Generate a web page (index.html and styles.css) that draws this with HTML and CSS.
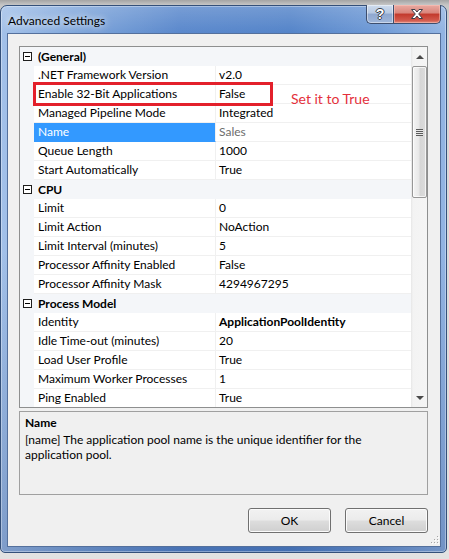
FILE: index.html
```html
<!DOCTYPE html>
<html>
<head>
<meta charset="utf-8">
<link rel="stylesheet" href="styles.css">
</head>
<body>
<div class="window">
  <div class="titlebar">
    <div class="title">Advanced Settings</div>
    <div class="caption-btns">
      <div class="cbtn help"><span class="qmark">?</span></div>
      <div class="cbtn close">
        <svg width="16" height="12" viewBox="0 0 16 12"><path d="M2.5 1.5h3.5l2 2.5 2-2.5h3.5l-3.8 4.5 3.8 4.5h-3.5l-2-2.5-2 2.5h-3.5l3.8-4.5z" fill="#fff" stroke="#3a3f4a" stroke-width="1" stroke-linejoin="round"/></svg>
      </div>
    </div>
  </div>
  <div class="client">
    <div class="grid">
      <div class="rows">
        <div class="cat"><span class="exp"></span><span class="cat-label">(General)</span></div>
        <div class="row"><span class="gut"></span><span class="name">.NET Framework Version</span><span class="val">v2.0</span></div>
        <div class="row"><span class="gut"></span><span class="name">Enable 32-Bit Applications</span><span class="val">False</span></div>
        <div class="row"><span class="gut"></span><span class="name">Managed Pipeline Mode</span><span class="val">Integrated</span></div>
        <div class="row selected"><span class="gut"></span><span class="name">Name</span><span class="val">Sales</span></div>
        <div class="row"><span class="gut"></span><span class="name">Queue Length</span><span class="val">1000</span></div>
        <div class="row"><span class="gut"></span><span class="name">Start Automatically</span><span class="val">True</span></div>
        <div class="cat"><span class="exp"></span><span class="cat-label">CPU</span></div>
        <div class="row"><span class="gut"></span><span class="name">Limit</span><span class="val">0</span></div>
        <div class="row"><span class="gut"></span><span class="name">Limit Action</span><span class="val">NoAction</span></div>
        <div class="row"><span class="gut"></span><span class="name">Limit Interval (minutes)</span><span class="val">5</span></div>
        <div class="row"><span class="gut"></span><span class="name">Processor Affinity Enabled</span><span class="val">False</span></div>
        <div class="row"><span class="gut"></span><span class="name">Processor Affinity Mask</span><span class="val">4294967295</span></div>
        <div class="cat"><span class="exp"></span><span class="cat-label">Process Model</span></div>
        <div class="row"><span class="gut"></span><span class="name">Identity</span><span class="val bold">ApplicationPoolIdentity</span></div>
        <div class="row"><span class="gut"></span><span class="name">Idle Time-out (minutes)</span><span class="val">20</span></div>
        <div class="row"><span class="gut"></span><span class="name">Load User Profile</span><span class="val">True</span></div>
        <div class="row"><span class="gut"></span><span class="name">Maximum Worker Processes</span><span class="val">1</span></div>
        <div class="row"><span class="gut"></span><span class="name">Ping Enabled</span><span class="val">True</span></div>
      </div>
      <div class="scroll">
        <div class="arrow"><span class="tri-up"></span></div>
        <div class="thumb"><span class="grip"></span></div>
        <div class="track"></div>
        <div class="arrow"><span class="tri-down"></span></div>
      </div>
      <div class="highlight"></div>
      <div class="note">Set it to True</div>
    </div>
    <div class="desc">
      <div class="desc-title">Name</div>
      <div class="desc-text">[name] The application pool name is the unique identifier for the application pool.</div>
    </div>
    <div class="buttons">
      <button class="btn">OK</button>
      <button class="btn">Cancel</button>
    </div>
    <svg class="gripper" width="8" height="8" viewBox="0 0 8 8">
      <g fill="#fff"><rect x="7" y="1" width="1" height="1"/><rect x="4" y="4" width="1" height="1"/><rect x="7" y="4" width="1" height="1"/><rect x="1" y="7" width="1" height="1"/><rect x="4" y="7" width="1" height="1"/><rect x="7" y="7" width="1" height="1"/></g>
      <g fill="#a6a6a6"><rect x="6" y="0" width="1" height="1"/><rect x="3" y="3" width="1" height="1"/><rect x="6" y="3" width="1" height="1"/><rect x="0" y="6" width="1" height="1"/><rect x="3" y="6" width="1" height="1"/><rect x="6" y="6" width="1" height="1"/></g>
    </svg>
  </div>
</div>
</body>
</html>
```
FILE: styles.css
```css
html, body {
  margin: 0;
  padding: 0;
}
body {
  width: 449px;
  height: 559px;
  overflow: hidden;
  background: linear-gradient(180deg, #a4a4a4 0, #c6c6c6 5px, #d6d6d6 40px, #e2e2e2 100%);
  font-family: Lato, "Liberation Sans", sans-serif;
  font-size: 12px;
  color: #000;
}
.window {
  box-sizing: border-box;
  margin-top: 5px;
  width: 447px;
  height: 548px;
  border: 1px solid #34507a;
  border-radius: 7px 7px 5px 5px;
  padding: 0 5px 5px 6px;
  display: flex;
  flex-direction: column;
  background:
    linear-gradient(180deg, rgba(255,255,255,0.18) 0, rgba(255,255,255,0) 27px, rgba(20,50,110,0) 45%, rgba(20,50,110,0.25) 100%),
    linear-gradient(90deg, #a3c1e9 0%, #7ea5da 18%, #5a88cc 40%, #5484c9 65%, #6f9ad6 85%, #93b5e3 100%);
  box-shadow: inset 0 0 0 1px rgba(255,255,255,0.35);
}
.titlebar {
  height: 27px;
  flex: none;
  display: flex;
  justify-content: space-between;
}
.title {
  align-self: center;
  padding-left: 1px;
  margin-top: 1px;
  text-shadow: 0 0 6px rgba(255,255,255,0.9), 0 0 12px rgba(255,255,255,0.6);
}
.caption-btns {
  display: flex;
  margin-top: -1px;
  height: 19px;
}
.cbtn {
  box-sizing: border-box;
  height: 19px;
  display: flex;
  align-items: center;
  justify-content: center;
  border: 1px solid #3d4e6e;
  border-top: none;
}
.help {
  width: 27px;
  border-radius: 0 0 0 5px;
  border-right: none;
  background: linear-gradient(180deg, #cfdcee 0, #b6c8e2 45%, #8fa8cf 50%, #9fb6da 100%);
  box-shadow: inset 0 0 0 1px rgba(255,255,255,0.45);
}
.close {
  width: 48px;
  border-radius: 0 0 5px 0;
  background: linear-gradient(180deg, #e9aaa2 0, #d9857b 45%, #c2392c 50%, #d2594c 85%, #e08a7e 100%);
  box-shadow: inset 0 0 0 1px rgba(255,200,190,0.5);
}
.qmark {
  font-family: "Liberation Sans", sans-serif;
  font-weight: bold;
  font-size: 14px;
  color: #fff;
  line-height: 1;
  text-shadow: 1px 0 0 #3a3f4a, -1px 0 0 #3a3f4a, 0 1px 0 #3a3f4a, 0 -1px 0 #3a3f4a;
}
.client {
  position: relative;
  flex: 1;
  box-sizing: border-box;
  background: #f0f0f0;
  border: 1px solid #54709c;
  padding: 12px 12px 0 11px;
  display: flex;
  flex-direction: column;
}
.grid {
  position: relative;
  box-sizing: border-box;
  height: 362px;
  flex: none;
  border: 1px solid #8e8f8f;
  display: flex;
  overflow: hidden;
}
.rows {
  width: 391px;
  flex: none;
  background: #fff;
}
.cat {
  height: 19px;
  display: flex;
  align-items: center;
  background: #f4f6f9;
  font-weight: bold;
}
.exp {
  position: relative;
  box-sizing: border-box;
  width: 9px;
  height: 9px;
  margin-left: 3px;
  border: 1px solid #1e1e1e;
  background: #fff;
}
.exp::after {
  content: "";
  position: absolute;
  left: 1px;
  top: 3px;
  width: 5px;
  height: 1px;
  background: #000;
}
.cat-label {
  margin-left: 6px;
}
.row {
  height: 19px;
  display: flex;
}
.row > span {
  box-sizing: border-box;
  height: 19px;
  line-height: 18px;
  white-space: nowrap;
}
.gut {
  width: 14px;
  flex: none;
  background: #f4f6f9;
}
.name {
  width: 182px;
  flex: none;
  padding-left: 4px;
  border-bottom: 1px solid #f0f0f0;
  border-right: 1px solid #f0f0f0;
}
.val {
  flex: 1;
  padding-left: 3px;
  border-bottom: 1px solid #f0f0f0;
}
.bold {
  font-weight: bold;
}
.selected .name {
  background: #3399ff;
  color: #fff;
  border-bottom-color: #3399ff;
}
.selected .val {
  color: #6d6d6d;
}
.scroll {
  width: 17px;
  flex: none;
  display: flex;
  flex-direction: column;
  background: linear-gradient(90deg, #e6e6e6 0, #f3f3f3 2px, #f5f5f5 100%);
}
.arrow {
  height: 19px;
  flex: none;
  display: flex;
  align-items: center;
  justify-content: center;
}
.tri-up {
  width: 0;
  height: 0;
  border-left: 4px solid transparent;
  border-right: 4px solid transparent;
  border-bottom: 4px solid #4a4a4a;
}
.tri-down {
  width: 0;
  height: 0;
  border-left: 4px solid transparent;
  border-right: 4px solid transparent;
  border-top: 4px solid #4a4a4a;
}
.thumb {
  box-sizing: border-box;
  height: 132px;
  margin-left: 1px;
  width: 15px;
  flex: none;
  border: 1px solid #979797;
  border-radius: 2px;
  background: linear-gradient(90deg, #f4f4f4 0, #e8e8e8 45%, #d6d6d6 55%, #dcdcdc 100%);
  box-shadow: inset 0 0 0 1px rgba(255,255,255,0.7);
  display: flex;
  align-items: center;
  justify-content: center;
}
.grip {
  width: 7px;
  height: 7px;
  background: repeating-linear-gradient(180deg, #5a5a5a 0, #5a5a5a 1px, #e8e8e8 1px, #e8e8e8 2px);
}
.track {
  flex: 1;
}
.highlight {
  position: absolute;
  left: 13px;
  top: 35px;
  width: 240px;
  height: 24px;
  box-sizing: border-box;
  border: 3px solid #e3202b;
}
.note {
  position: absolute;
  left: 271px;
  top: 43px;
  font-size: 14px;
  color: #e4303b;
  white-space: nowrap;
}
.desc {
  box-sizing: border-box;
  height: 84px;
  flex: none;
  margin-top: 3px;
  border: 1px solid #a0a0a0;
  padding: 3px 10px 0 5px;
}
.desc-title {
  font-weight: bold;
  line-height: 15px;
}
.desc-text {
  margin-top: 2px;
  line-height: 15px;
}
.buttons {
  margin-top: 13px;
  display: flex;
  justify-content: flex-end;
  gap: 14px;
}
.btn {
  box-sizing: border-box;
  width: 83px;
  height: 25px;
  margin: 0;
  padding: 0;
  border: 1px solid #707070;
  border-radius: 3px;
  background: linear-gradient(180deg, #f2f2f2 0, #ebebeb 48%, #dddddd 52%, #cfcfcf 100%);
  box-shadow: inset 0 0 0 1px #fbfbfb;
  font-family: Lato, "Liberation Sans", sans-serif;
  font-size: 12px;
  color: #000;
}
.gripper {
  position: absolute;
  right: 1px;
  bottom: 2px;
}
```
